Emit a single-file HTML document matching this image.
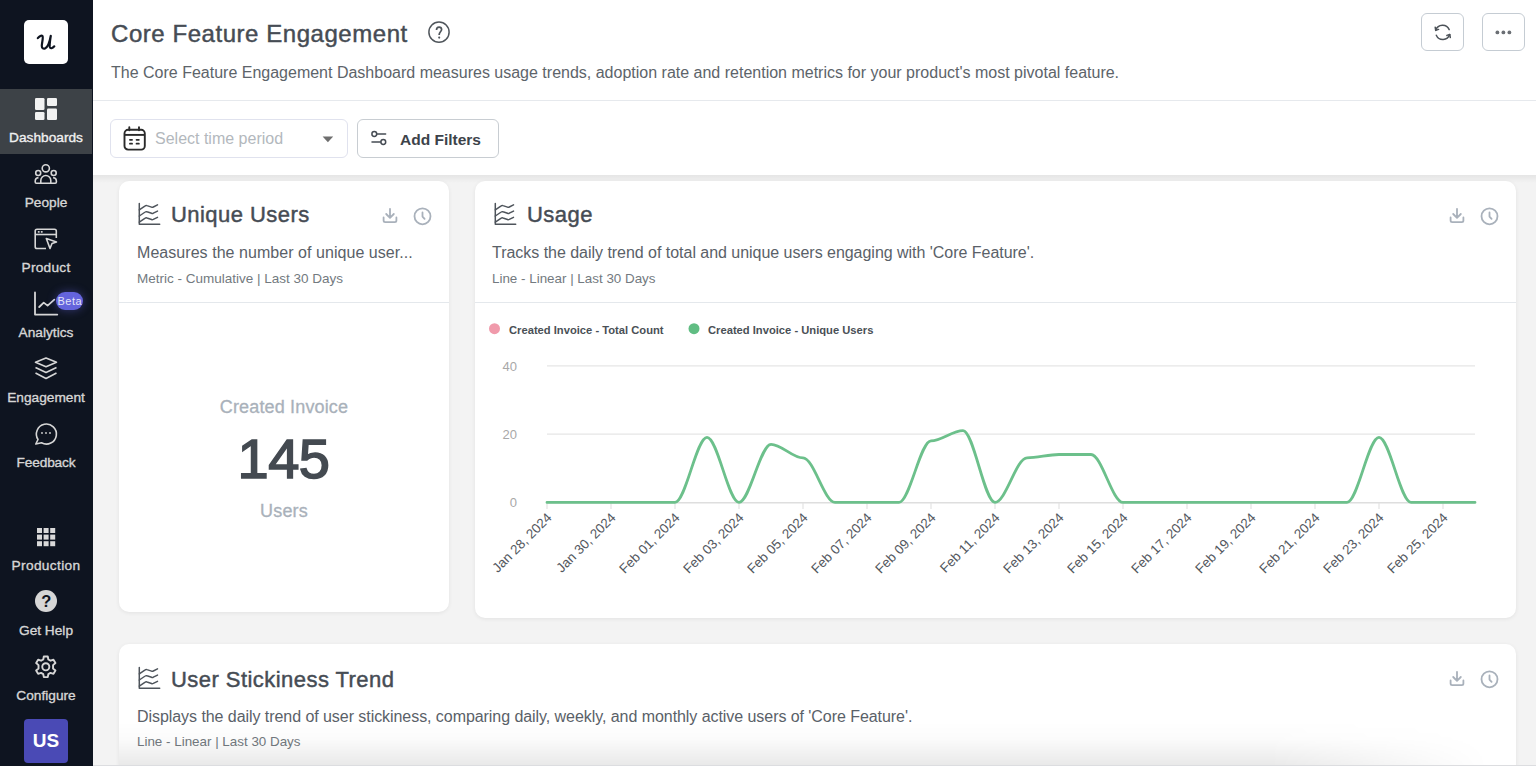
<!DOCTYPE html>
<html><head><meta charset="utf-8">
<style>
*{margin:0;padding:0;box-sizing:border-box}
html,body{width:1536px;height:766px;overflow:hidden;background:#f3f3f3;font-family:"Liberation Sans",sans-serif}
.abs{position:absolute;white-space:nowrap}
.ico{position:absolute;overflow:visible}
#side{position:absolute;left:0;top:0;width:93px;height:766px;background:#0e1420}
.lbl{position:absolute;left:0;width:92px;text-align:center;color:#d6d6d6;font-size:13.7px;line-height:16px;-webkit-text-stroke:0.35px currentColor}
#top{position:absolute;left:93px;top:0;width:1443px;height:175px;background:#fff}
.card{position:absolute;background:#fff;border-radius:10px;box-shadow:0 1px 4px rgba(0,0,0,.07)}
.ttl{color:#464c54;-webkit-text-stroke:0.45px #464c54;letter-spacing:0.45px}
.ttl2{color:#464c54;-webkit-text-stroke:0.45px #464c54}
.desc{color:#5a6168}
.meta{color:#737a80}
</style></head><body>
<div id="side">
  <div class="abs" style="left:24px;top:20px;width:44px;height:44px;background:#fff;border-radius:5px"></div>
  <svg class="ico" style="left:0;top:0" width="93" height="70" viewBox="0 0 93 70" fill="none" stroke="#0e1420" stroke-width="2.2" stroke-linecap="round" stroke-linejoin="round"><path d="M37.8 38.2C39.5 36 41.5 35 42.5 36C43.5 37.5 41.8 43 41.8 46C41.8 48.5 43.5 49 45 48.5C47.5 47.5 49.5 43 50.8 35.8C50.2 40 49.3 44.5 49.8 47C50.3 49 52.5 48.5 54.3 46.3"/></svg>
  <div class="abs" style="left:0;top:89px;width:92px;height:65px;background:#3d4247"></div>
  <svg class="ico" style="left:35px;top:98px" width="22" height="22" viewBox="0 0 22 22" fill="#f2f2f2"><rect x="0" y="0" width="9.5" height="12" rx="1.3"/><rect x="0" y="14" width="9.5" height="8" rx="1.3"/><rect x="12" y="0" width="10" height="8" rx="1.3"/><rect x="12" y="10.5" width="10" height="11.5" rx="1.3"/></svg>
  <div class="lbl" style="top:130px;color:#f0f0f0">Dashboards</div>
  <svg class="ico" style="left:34px;top:163px" width="24" height="22" viewBox="0 0 24 22" fill="none" stroke="#d6d6d6" stroke-width="1.6" stroke-linejoin="round"><circle cx="11.8" cy="5.3" r="3.6"/><circle cx="4.2" cy="10" r="2.5"/><circle cx="19.7" cy="10" r="2.5"/><path d="M6.8 20.2V17.5A5 5 0 0 1 16.8 17.5V20.2"/><path d="M4.5 14.6C2.3 14.8 1.2 16.5 1.2 18.3V19Q1.2 20.2 2.4 20.2H21.2Q22.4 20.2 22.4 19V18.3C22.4 16.5 21.3 14.8 19.1 14.6"/></svg>
  <div class="lbl" style="top:195px">People</div>
  <svg class="ico" style="left:34px;top:228px" width="24" height="22" viewBox="0 0 24 22" fill="none" stroke="#d6d6d6" stroke-width="1.6" stroke-linejoin="round"><path d="M12 20.5H3Q1.2 20.5 1.2 18.7V3Q1.2 1.2 3 1.2H20.5Q22.3 1.2 22.3 3V10"/><path d="M1.2 6.5H22.3"/><path d="M4.5 3.9H5M7.5 3.9H8" stroke-linecap="round"/><path d="M12.3 10.5L22.5 14L18 15.5L16 20.5Z"/></svg>
  <div class="lbl" style="top:260px;letter-spacing:0.25px">Product</div>
  <svg class="ico" style="left:0;top:285px" width="93" height="35" viewBox="0 285 93 35" fill="none" stroke="#d6d6d6" stroke-width="1.8" stroke-linecap="round" stroke-linejoin="round"><path d="M35 292.5V314.6H57.3"/><path d="M39.2 307L43.7 302.6L47.6 305.6L54.3 299.6"/></svg>
  <div class="abs" style="left:56px;top:292px;width:27px;height:18px;border-radius:9px;background:#6464dc;box-shadow:0 0 10px rgba(100,100,220,.45);color:#e4e4f7;font-size:11px;line-height:19px;text-align:center;letter-spacing:0.5px;text-indent:0.5px">Beta</div>
  <div class="lbl" style="top:325px">Analytics</div>
  <svg class="ico" style="left:34px;top:357px" width="24" height="24" viewBox="0 0 24 24" fill="none" stroke="#d6d6d6" stroke-width="1.6" stroke-linejoin="round"><path d="M12 1L22.5 5.3L12 9.7L1.5 5.3Z"/><path d="M1.5 10.5L12 15.5L22.5 10.5"/><path d="M1.5 16L12 21.5L22.5 16"/></svg>
  <div class="lbl" style="top:390px">Engagement</div>
  <svg class="ico" style="left:35px;top:422px" width="22" height="23" viewBox="0 0 22 23" fill="none" stroke="#d6d6d6" stroke-width="1.6" stroke-linejoin="round"><path d="M3 17.5A10 10 0 1 1 6.5 20.8L0.8 22Z"/><circle cx="7" cy="11" r="0.9" fill="#d6d6d6" stroke="none"/><circle cx="11" cy="11" r="0.9" fill="#d6d6d6" stroke="none"/><circle cx="15" cy="11" r="0.9" fill="#d6d6d6" stroke="none"/></svg>
  <div class="lbl" style="top:455px;letter-spacing:-0.15px">Feedback</div>
  <svg class="ico" style="left:37px;top:528px" width="18" height="18" viewBox="0 0 18 18" fill="#d9d9d9"><rect x="0" y="0" width="5" height="5"/><rect x="6.6" y="0" width="5" height="5"/><rect x="13.2" y="0" width="5" height="5"/><rect x="0" y="6.6" width="5" height="5"/><rect x="6.6" y="6.6" width="5" height="5"/><rect x="13.2" y="6.6" width="5" height="5"/><rect x="0" y="13.2" width="5" height="5"/><rect x="6.6" y="13.2" width="5" height="5"/><rect x="13.2" y="13.2" width="5" height="5"/></svg>
  <div class="lbl" style="top:557.5px;letter-spacing:0.35px">Production</div>
  <svg class="ico" style="left:35px;top:590px" width="22" height="22" viewBox="0 0 22 22"><circle cx="11" cy="11" r="11" fill="#d6d6d6"/><text x="11.2" y="17.3" text-anchor="middle" font-family="Liberation Sans" font-weight="bold" font-size="16.5" fill="#0e1420">?</text></svg>
  <div class="lbl" style="top:622.5px">Get Help</div>
  <svg class="ico" style="left:34.2px;top:654.6px" width="23.6" height="23.6" viewBox="0 0 24 24" fill="none" stroke="#d6d6d6" stroke-width="1.95" stroke-linejoin="round"><path d="M10 1.5H14L14.6 4.6L16.8 5.8L19.8 4.8L21.8 8.2L19.4 10.3V13.7L21.8 15.8L19.8 19.2L16.8 18.2L14.6 19.4L14 22.5H10L9.4 19.4L7.2 18.2L4.2 19.2L2.2 15.8L4.6 13.7V10.3L2.2 8.2L4.2 4.8L7.2 5.8L9.4 4.6Z"/><circle cx="12" cy="12" r="3.6"/></svg>
  <div class="lbl" style="top:687.5px">Configure</div>
  <div class="abs" style="left:24px;top:719px;width:44px;height:44px;border-radius:4px;background:#4a4ab5;color:#fff;font-size:19px;font-weight:bold;line-height:44px;text-align:center">US</div>
</div>

<div id="top">
  <div class="abs ttl2" style="left:18px;top:19px;font-size:24px;line-height:30px;letter-spacing:0.55px">Core Feature Engagement</div>
  <svg class="ico" style="left:335px;top:21px" width="22" height="22" viewBox="0 0 22 22" fill="none" stroke="#4f555b" stroke-width="1.5"><circle cx="11" cy="11.15" r="10.1"/><path d="M8.5 9.1C8.5 7.4 9.6 6.1 11.1 6.1C12.6 6.1 13.6 7.2 13.6 8.6C13.6 10.6 11.2 11.1 11.2 13.5V14" stroke-width="1.7"/><circle cx="11.2" cy="16.6" r="1.05" fill="#4f555b" stroke="none"/></svg>
  <div class="abs desc" style="left:18px;top:63px;font-size:16px;line-height:19px;color:#5d646a">The Core Feature Engagement Dashboard measures usage trends, adoption rate and retention metrics for your product's most pivotal feature.</div>
  <div class="abs" style="left:1328px;top:13px;width:43px;height:38px;border:1px solid #c5ccd3;border-radius:6px"></div>
  <svg class="ico" style="left:1341px;top:24px" width="18" height="18" viewBox="0 0 18 18" fill="none" stroke="#4c5258" stroke-width="1.5" stroke-linecap="round"><path d="M1.8 6.2A7.2 7.2 0 0 1 15.2 5.6"/><path d="M15.7 10.6A7.2 7.2 0 0 1 2.3 11.2"/><path d="M1.2 3.2L1.7 6.4L4.6 5.4" stroke-linejoin="round"/><path d="M16.3 13.6L15.8 10.4L12.9 11.4" stroke-linejoin="round"/></svg>
  <div class="abs" style="left:1389px;top:13px;width:43px;height:38px;border:1px solid #c5ccd3;border-radius:6px"></div>
  <svg class="ico" style="left:1401px;top:29px" width="18" height="7" viewBox="0 0 18 7" fill="#6b6f74"><circle cx="3.4" cy="3.4" r="1.9"/><circle cx="9.4" cy="3.4" r="1.9"/><circle cx="15.4" cy="3.4" r="1.9"/></svg>
  <div class="abs" style="left:0;top:100px;width:1443px;height:1px;background:#e6e9ed"></div>
  <div class="abs" style="left:17px;top:119px;width:238px;height:39px;border:1px solid #e0e2ee;border-radius:6px"></div>
  <svg class="ico" style="left:29px;top:126px" width="24" height="24" viewBox="0 0 24 24" fill="none" stroke="#2a2a2a" stroke-width="1.9"><rect x="2.5" y="3.8" width="20.3" height="19.8" rx="3.6"/><path d="M2.5 8.9H22.8"/><path d="M7.3 1.2V4.2M17 1.2V4.2" stroke-linecap="round"/><path d="M7.9 13.8H10.1M14.5 13.8H16.9M7.9 17.7H10.1M14.5 17.7H16.9" stroke-width="1.7" stroke-linecap="round"/></svg>
  <div class="abs" style="left:62px;top:129px;font-size:16px;line-height:19px;color:#b3b8bd">Select time period</div>
  <svg class="ico" style="left:229px;top:135.5px" width="12" height="7" viewBox="0 0 12 7" fill="#6e6e6e"><path d="M0.6 0.5H11.2L5.9 6.3Z"/></svg>
  <div class="abs" style="left:264px;top:119px;width:142px;height:39px;border:1px solid #c8cdd2;border-radius:6px"></div>
  <svg class="ico" style="left:277px;top:128px" width="18" height="18" viewBox="0 0 18 18" fill="none" stroke="#464c54" stroke-width="1.5" stroke-linecap="round"><circle cx="4.3" cy="6" r="2.4"/><path d="M7.2 6H15.6"/><circle cx="13.3" cy="14" r="2.4"/><path d="M2 14H10.4"/></svg>
  <div class="abs" style="left:307px;top:131px;font-size:15.5px;line-height:18px;font-weight:bold;color:#3d434a">Add Filters</div>
  <div class="abs" style="left:0;top:175px;width:1443px;height:8px;background:linear-gradient(rgba(0,0,0,.06),rgba(0,0,0,0))"></div>
</div>

<div class="card" style="left:119px;top:181px;width:330px;height:431px">
  <div class="abs" style="left:0;top:121px;width:330px;height:1px;background:#e4e8ec"></div>
  <div class="abs" style="left:0;top:214.5px;width:330px;text-align:center;font-size:18px;line-height:22px;color:#a9b1ba;letter-spacing:0.15px;-webkit-text-stroke:0.3px #a9b1ba">Created Invoice</div>
  <div class="abs" style="left:0;top:248px;width:330px;text-align:center;font-size:56px;color:#444a51;-webkit-text-stroke:1.6px #444a51;line-height:60px;letter-spacing:-0.5px;text-indent:-1px">145</div>
  <div class="abs" style="left:0;top:318.5px;width:330px;text-align:center;font-size:18px;line-height:22px;color:#a9b1ba;letter-spacing:0.15px;-webkit-text-stroke:0.3px #a9b1ba">Users</div>
</div>
<svg class="ico" style="left:136px;top:202px" width="24" height="24" viewBox="0 0 24 24" fill="none" stroke="#4e545b" stroke-width="1.5" stroke-linecap="round" stroke-linejoin="round"><path d="M3.3 1.5V22.2H23.7"/><path d="M3.3 7.8L9.2 3.8Q10 3.2 11 3.6L15.5 5.1Q16.4 5.4 17.3 5.0L21.5 2.9"/><path d="M3.3 14.0L9.2 10.0Q10 9.4 11 9.8L15.5 11.3Q16.4 11.6 17.3 11.2L21.5 9.1"/><path d="M3.3 20.2L9.2 16.2Q10 15.6 11 16.0L15.5 17.5Q16.4 17.8 17.3 17.4L21.5 15.3"/></svg>
<div class="abs ttl" style="left:171px;top:201px;font-size:22px;line-height:28px">Unique Users</div>
<svg class="ico" style="left:381px;top:207px" width="52" height="20" viewBox="0 0 52 20" fill="none" stroke="#a9b1bb" stroke-width="1.8" stroke-linecap="round" stroke-linejoin="round"><path d="M9 1.8V10.6M5.2 7L9 10.8L12.8 7"/><path d="M2.6 10.4V13.6Q2.6 15.2 4.2 15.2H13.8Q15.4 15.2 15.4 13.6V10.4"/><circle cx="41.5" cy="9.3" r="8"/><path d="M41.5 5.4V9.6L43.6 11.9"/></svg>
<div class="abs desc" style="left:137px;top:242.5px;font-size:16px;line-height:19px;letter-spacing:0.05px">Measures the number of unique user...</div>
<div class="abs meta" style="left:137px;top:271px;font-size:13.5px;line-height:16px">Metric - Cumulative | Last 30 Days</div>

<div class="card" style="left:475px;top:181px;width:1041px;height:437px">
  <div class="abs" style="left:0;top:121px;width:1041px;height:1px;background:#e4e8ec"></div>
</div>
<svg class="ico" style="left:492px;top:202px" width="24" height="24" viewBox="0 0 24 24" fill="none" stroke="#4e545b" stroke-width="1.5" stroke-linecap="round" stroke-linejoin="round"><path d="M3.3 1.5V22.2H23.7"/><path d="M3.3 7.8L9.2 3.8Q10 3.2 11 3.6L15.5 5.1Q16.4 5.4 17.3 5.0L21.5 2.9"/><path d="M3.3 14.0L9.2 10.0Q10 9.4 11 9.8L15.5 11.3Q16.4 11.6 17.3 11.2L21.5 9.1"/><path d="M3.3 20.2L9.2 16.2Q10 15.6 11 16.0L15.5 17.5Q16.4 17.8 17.3 17.4L21.5 15.3"/></svg>
<div class="abs ttl" style="left:527px;top:201px;font-size:22px;line-height:28px">Usage</div>
<svg class="ico" style="left:1448px;top:207px" width="52" height="20" viewBox="0 0 52 20" fill="none" stroke="#a9b1bb" stroke-width="1.8" stroke-linecap="round" stroke-linejoin="round"><path d="M9 1.8V10.6M5.2 7L9 10.8L12.8 7"/><path d="M2.6 10.4V13.6Q2.6 15.2 4.2 15.2H13.8Q15.4 15.2 15.4 13.6V10.4"/><circle cx="41.5" cy="9.3" r="8"/><path d="M41.5 5.4V9.6L43.6 11.9"/></svg>
<div class="abs desc" style="left:492px;top:242.5px;font-size:16px;line-height:19px;letter-spacing:-0.03px">Tracks the daily trend of total and unique users engaging with 'Core Feature'.</div>
<div class="abs meta" style="left:492px;top:271px;font-size:13.4px;line-height:16px">Line - Linear | Last 30 Days</div>
<svg class="ico" style="left:0;top:0" width="1536" height="766" viewBox="0 0 1536 766">
  <circle cx="494.5" cy="328.7" r="5.5" fill="#f09aab"/>
  <circle cx="694" cy="328.7" r="5.5" fill="#60bd83"/>
  <text x="509" y="334" font-family="Liberation Sans" font-weight="bold" font-size="11.2" fill="#4a5056">Created Invoice - Total Count</text>
  <text x="708" y="334" font-family="Liberation Sans" font-weight="bold" font-size="11.2" fill="#4a5056">Created Invoice - Unique Users</text>
  <g stroke="#e6e6e6" stroke-width="1.2"><line x1="547" y1="365.8" x2="1475" y2="365.8"/><line x1="547" y1="434.2" x2="1475" y2="434.2"/></g>
  <line x1="547" y1="502.8" x2="1475" y2="502.8" stroke="#dedede" stroke-width="1.5"/>
  <g stroke="#e3e3e3" stroke-width="1.2"><line x1="547" y1="503" x2="547" y2="509"/><line x1="611" y1="503" x2="611" y2="509"/><line x1="675" y1="503" x2="675" y2="509"/><line x1="739" y1="503" x2="739" y2="509"/><line x1="803" y1="503" x2="803" y2="509"/><line x1="867" y1="503" x2="867" y2="509"/><line x1="931" y1="503" x2="931" y2="509"/><line x1="995" y1="503" x2="995" y2="509"/><line x1="1059" y1="503" x2="1059" y2="509"/><line x1="1123" y1="503" x2="1123" y2="509"/><line x1="1187" y1="503" x2="1187" y2="509"/><line x1="1251" y1="503" x2="1251" y2="509"/><line x1="1315" y1="503" x2="1315" y2="509"/><line x1="1379" y1="503" x2="1379" y2="509"/><line x1="1443" y1="503" x2="1443" y2="509"/></g>
  <g font-family="Liberation Sans" font-size="13" fill="#a8a8a8" text-anchor="end"><text x="517" y="371">40</text><text x="517" y="439">20</text><text x="517" y="507">0</text></g>
  <g font-family="Liberation Sans" font-size="13.4" fill="#53585e"><text transform="translate(552.5,518.5) rotate(-45)" text-anchor="end">Jan 28, 2024</text><text transform="translate(616.5,518.5) rotate(-45)" text-anchor="end">Jan 30, 2024</text><text transform="translate(680.5,518.5) rotate(-45)" text-anchor="end">Feb 01, 2024</text><text transform="translate(744.5,518.5) rotate(-45)" text-anchor="end">Feb 03, 2024</text><text transform="translate(808.5,518.5) rotate(-45)" text-anchor="end">Feb 05, 2024</text><text transform="translate(872.5,518.5) rotate(-45)" text-anchor="end">Feb 07, 2024</text><text transform="translate(936.5,518.5) rotate(-45)" text-anchor="end">Feb 09, 2024</text><text transform="translate(1000.5,518.5) rotate(-45)" text-anchor="end">Feb 11, 2024</text><text transform="translate(1064.5,518.5) rotate(-45)" text-anchor="end">Feb 13, 2024</text><text transform="translate(1128.5,518.5) rotate(-45)" text-anchor="end">Feb 15, 2024</text><text transform="translate(1192.5,518.5) rotate(-45)" text-anchor="end">Feb 17, 2024</text><text transform="translate(1256.5,518.5) rotate(-45)" text-anchor="end">Feb 19, 2024</text><text transform="translate(1320.5,518.5) rotate(-45)" text-anchor="end">Feb 21, 2024</text><text transform="translate(1384.5,518.5) rotate(-45)" text-anchor="end">Feb 23, 2024</text><text transform="translate(1448.5,518.5) rotate(-45)" text-anchor="end">Feb 25, 2024</text></g>
  <path d="M547,502.4C557.67,502.4,568.33,502.4,579,502.4C589.67,502.4,600.33,502.4,611,502.4C621.67,502.4,632.33,502.4,643,502.4C653.67,502.4,664.33,502.4,675,502.4C685.67,502.4,696.33,437.4,707,437.4C717.67,437.4,728.33,502.4,739,502.4C749.67,502.4,760.33,444.3,771,444.3C781.67,444.3,792.33,457.9,803,457.9C813.67,457.9,824.33,502.4,835,502.4C845.67,502.4,856.33,502.4,867,502.4C877.67,502.4,888.33,502.4,899,502.4C909.67,502.4,920.33,440.8,931,440.8C941.67,440.8,952.33,430.6,963,430.6C973.67,430.6,984.33,502.4,995,502.4C1005.67,502.4,1016.33,457.9,1027,457.9C1037.67,457.9,1048.33,454.5,1059,454.5C1069.67,454.5,1080.33,454.5,1091,454.5C1101.67,454.5,1112.33,502.4,1123,502.4C1133.67,502.4,1144.33,502.4,1155,502.4C1165.67,502.4,1176.33,502.4,1187,502.4C1197.67,502.4,1208.33,502.4,1219,502.4C1229.67,502.4,1240.33,502.4,1251,502.4C1261.67,502.4,1272.33,502.4,1283,502.4C1293.67,502.4,1304.33,502.4,1315,502.4C1325.67,502.4,1336.33,502.4,1347,502.4C1357.67,502.4,1368.33,437.4,1379,437.4C1389.67,437.4,1400.33,502.4,1411,502.4C1421.67,502.4,1432.33,502.4,1443,502.4C1453.67,502.4,1464.33,502.4,1475,502.4" fill="none" stroke="#6cc08b" stroke-width="2.8" stroke-linejoin="round" stroke-linecap="round"/>
</svg>

<div class="card" style="left:119px;top:644px;width:1397px;height:160px"></div>
<svg class="ico" style="left:136px;top:666px" width="24" height="24" viewBox="0 0 24 24" fill="none" stroke="#4e545b" stroke-width="1.5" stroke-linecap="round" stroke-linejoin="round"><path d="M3.3 1.5V22.2H23.7"/><path d="M3.3 7.8L9.2 3.8Q10 3.2 11 3.6L15.5 5.1Q16.4 5.4 17.3 5.0L21.5 2.9"/><path d="M3.3 14.0L9.2 10.0Q10 9.4 11 9.8L15.5 11.3Q16.4 11.6 17.3 11.2L21.5 9.1"/><path d="M3.3 20.2L9.2 16.2Q10 15.6 11 16.0L15.5 17.5Q16.4 17.8 17.3 17.4L21.5 15.3"/></svg>
<div class="abs ttl" style="left:171px;top:665.5px;font-size:22px;line-height:28px">User Stickiness Trend</div>
<svg class="ico" style="left:1448px;top:670px" width="52" height="20" viewBox="0 0 52 20" fill="none" stroke="#a9b1bb" stroke-width="1.8" stroke-linecap="round" stroke-linejoin="round"><path d="M9 1.8V10.6M5.2 7L9 10.8L12.8 7"/><path d="M2.6 10.4V13.6Q2.6 15.2 4.2 15.2H13.8Q15.4 15.2 15.4 13.6V10.4"/><circle cx="41.5" cy="9.3" r="8"/><path d="M41.5 5.4V9.6L43.6 11.9"/></svg>
<div class="abs desc" style="left:137px;top:706.5px;font-size:16px;line-height:19px;letter-spacing:-0.058px">Displays the daily trend of user stickiness, comparing daily, weekly, and monthly active users of 'Core Feature'.</div>
<div class="abs meta" style="left:137px;top:734px;font-size:13.4px;line-height:16px">Line - Linear | Last 30 Days</div>
<div class="abs" style="left:119px;top:722px;width:1397px;height:43px;background:linear-gradient(rgba(0,0,0,0),rgba(0,0,0,.015) 40%,rgba(0,0,0,.085));-webkit-mask-image:radial-gradient(ellipse 1370px 220px at 0 100%,#000 84%,transparent 100%)"></div>
<div class="abs" style="left:93px;top:765px;width:1443px;height:1px;background:#dcdde0"></div>
</body></html>
